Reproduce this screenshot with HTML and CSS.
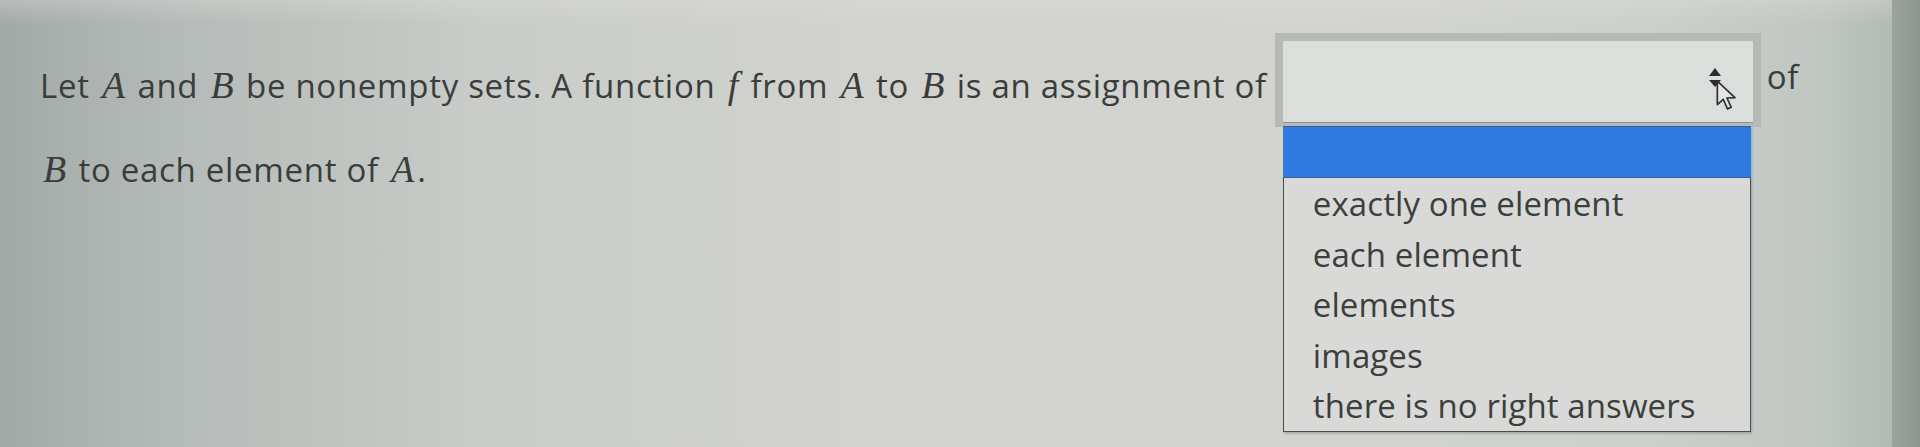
FILE: index.html
```html
<!DOCTYPE html>
<html lang="en">
<head>
<meta charset="utf-8">
<title>Function definition – fill in the blank</title>
<link rel="stylesheet" href="styles.css">
</head>
<body>
<div class="screen">
  <div class="panel">
    <div class="question">
      <div class="line line-first">
        <span class="text">Let <i class="math">A</i> and <i class="math">B</i> be nonempty sets. A function <i class="math">f</i> from <i class="math">A</i> to <i class="math">B</i> is an assignment of</span>
        <div class="select-wrap">
          <div class="select">
            <svg class="spinner" width="16" height="24" viewBox="0 0 16 24" aria-hidden="true">
              <path d="M8 1 L14 9 L2 9 Z" fill="#2b2e2d"/>
              <path d="M2 13 L14 13 L8 20 Z" fill="#2b2e2d"/>
            </svg>
            <svg class="cursor" width="26" height="32" viewBox="0 0 24 30" aria-hidden="true">
              <path d="M2 2 L2 24 L7.5 19 L11.5 28 L15 26.5 L11 17.8 L18.5 17.5 Z" fill="#e4e6e3" stroke="#2e3130" stroke-width="1.6" stroke-linejoin="round"/>
            </svg>
          </div>
          <ul class="options">
            <li class="option option-active"></li>
            <li class="option">exactly one element</li>
            <li class="option">each element</li>
            <li class="option">elements</li>
            <li class="option">images</li>
            <li class="option">there is no right answers</li>
          </ul>
        </div>
        <span class="text text-after">of</span>
      </div>
      <div class="line line-second">
        <span class="text"><i class="math">B</i> to each element of <i class="math">A</i>.</span>
      </div>
    </div>
  </div>
  <div class="bezel"></div>
</div>
</body>
</html>
```

FILE: styles.css
```css
* {
  box-sizing: border-box;
}

html, body {
  margin: 0;
  padding: 0;
  height: 100%;
}

body {
  font-family: "Open Sans", "Noto Sans", sans-serif;
  color: #393d3c;
  overflow: hidden;
}

.screen {
  display: flex;
  height: 447px;
  background: linear-gradient(to right, #a2aaa8 0%, #b6bcb9 10%, #c9ccc8 25%, #d2d3ce 45%, #d3d4cf 70%, #ccd0cb 86%, #c0c6c2 95%, #adb5b1 100%);
}

.panel {
  flex: 1;
  background: linear-gradient(to bottom, rgba(222, 223, 219, 0.35) 0px, rgba(222, 223, 219, 0) 24px);
}

.bezel {
  width: 28px;
  background: linear-gradient(to right, #9aa39e, #8c9690);
}

.question {
  padding: 33px 0 0 40px;
}

.line {
  display: flex;
  align-items: flex-start;
}

.text {
  font-size: 33px;
  line-height: 40px;
  letter-spacing: 0.7px;
  white-space: nowrap;
}

.line-first .text {
  margin-top: 32px;
}

.text-after {
  margin-left: 6px;
  margin-top: 24px !important;
}

.line-second {
  margin-top: 22px;
}

.math {
  font-family: "Liberation Serif", "DejaVu Serif", serif;
  font-style: italic;
  font-size: 38px;
  letter-spacing: 0;
  padding: 0 3px;
}

/* dropdown: closed field plus its open list */
.select-wrap {
  position: relative;
  margin-left: 8px;
  width: 486px;
  flex-shrink: 0;
}

.select {
  position: relative;
  height: 94px;
  border: 8px solid #b6bab7;
  border-bottom-width: 4px;
  background: #dcdedb;
  box-shadow: inset 0 -1px 0 #8d918f;
}

.spinner {
  position: absolute;
  right: 30px;
  top: 26px;
}

.cursor {
  position: absolute;
  right: 12px;
  top: 38px;
}

.options {
  position: absolute;
  left: 8px;
  top: 93px;
  width: 468px;
  margin: 0;
  padding: 0;
  list-style: none;
  background: #d9dad7;
  border: 1px solid #4a4d4c;
  border-top: none;
  box-shadow: 1px 2px 2px rgba(60, 66, 64, 0.25);
}

.option {
  height: 50.5px;
  padding-left: 29px;
  font-size: 33px;
  line-height: 52px;
  letter-spacing: 0.1px;
  color: #3b3f3e;
  white-space: nowrap;
}

.option-active {
  height: 52px;
  margin: 0 -1px;
  background: #2f7ae0;
  border-top: 1px solid #3f5f8f;
  border-bottom: 1px solid #3a5e95;
}
```
